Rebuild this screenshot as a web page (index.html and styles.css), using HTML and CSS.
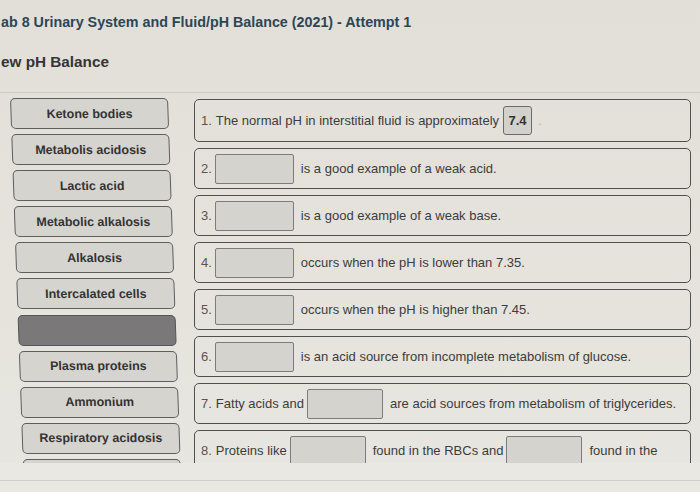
FILE: index.html
```html
<!DOCTYPE html>
<html lang="en">
<head>
  <meta charset="UTF-8">
  <meta name="viewport" content="width=device-width, initial-scale=1.0">
  <title>pH Balance</title>
  <link rel="stylesheet" href="styles.css">
</head>
<body>

  <!-- Page heading -->
  <header class="head">
    <h1 class="title">ab 8 Urinary System and Fluid/pH Balance (2021) - Attempt 1</h1>
    <h2 class="subtitle">ew pH Balance</h2>
  </header>

  <div class="quiz">
    <!-- Word bank -->
    <div class="bank">
      <div class="chip">Ketone bodies</div>
      <div class="chip">Metabolis acidosis</div>
      <div class="chip">Lactic acid</div>
      <div class="chip">Metabolic alkalosis</div>
      <div class="chip">Alkalosis</div>
      <div class="chip">Intercalated cells</div>
      <div class="chip used"></div>
      <div class="chip">Plasma proteins</div>
      <div class="chip">Ammonium</div>
      <div class="chip">Respiratory acidosis</div>
      <div class="chip"></div>
    </div>

    <!-- Questions -->
    <div class="questions">
      <div class="q">
        <span class="num">1.</span><span>The normal pH in interstitial fluid is approximately</span>
        <span class="answer">7.4</span><span class="dot">.</span>
      </div>
      <div class="q">
        <span class="num">2.</span><span class="blank"></span>
        <span>is a good example of a weak acid.</span>
      </div>
      <div class="q">
        <span class="num">3.</span><span class="blank"></span>
        <span>is a good example of a weak base.</span>
      </div>
      <div class="q">
        <span class="num">4.</span><span class="blank"></span>
        <span>occurs when the pH is lower than 7.35.</span>
      </div>
      <div class="q">
        <span class="num">5.</span><span class="blank"></span>
        <span>occurs when the pH is higher than 7.45.</span>
      </div>
      <div class="q">
        <span class="num">6.</span><span class="blank"></span>
        <span>is an acid source from incomplete metabolism of glucose.</span>
      </div>
      <div class="q">
        <span class="num">7.</span><span>Fatty acids and</span><span class="blank"></span>
        <span>are acid sources from metabolism of triglycerides.</span>
      </div>
      <div class="q">
        <span class="num">8.</span><span>Proteins like</span><span class="blank"></span>
        <span>found in the RBCs and</span><span class="blank"></span>
        <span>found in the</span>
      </div>
    </div>
  </div>

  <div class="foot"><div class="foot-line"></div></div>

</body>
</html>
```

FILE: styles.css
```css
/* Base */
* { margin: 0; padding: 0; box-sizing: border-box; }
html, body { width: 100%; height: 100%; }
body {
  font-family: "Liberation Sans", Arial, sans-serif;
  background: linear-gradient(#e2dfd8, #e8e6e0);
  color: #3a3a3a;
  overflow: hidden;
}

/* Heading */
.head { height: 93px; padding: 13px 0 0 1px; border-bottom: 1px solid #cdcac3; }
.title { font-size: 14.3px; line-height: 18px; font-weight: bold; color: #2c4656; white-space: nowrap; }
.subtitle { margin-top: 21px; font-size: 15.3px; line-height: 20px; font-weight: bold; color: #353535; }

/* Quiz area */
.quiz { display: flex; gap: 26px; height: 370px; padding: 5px 9px 0 10px; overflow: hidden; }

/* photo of the screen leans a little, so the bank drifts right as it goes down */
.bank {
  width: 158px; flex-shrink: 0;
  display: flex; flex-direction: column; gap: 5.1px;
  transform: skewX(2deg); transform-origin: top left;
}
.chip {
  height: 31px; flex-shrink: 0;
  display: flex; align-items: center; justify-content: center;
  background: #d6d4cf;
  border: 1.5px solid #5e5e5e;
  border-radius: 5px;
  font-size: 12.5px; font-weight: bold; color: #333;
}
.chip.used { background: #7a7878; border-color: #555; }

.questions { flex: 1; display: flex; flex-direction: column; gap: 6px; padding-top: 1px; }
.q {
  min-height: 41px; flex-shrink: 0;
  display: flex; align-items: center; white-space: nowrap;
  padding: 0 6px;
  border: 1.5px solid #505050;
  border-radius: 5px;
  font-size: 13px; color: #3c3c3c;
}
.q:first-child { min-height: 43px; }
.num { color: #555; margin-right: 4px; }
.num + .blank { margin-left: -1px; }
.blank {
  width: 79px; height: 30px; flex-shrink: 0;
  margin: 0 7px 0 3px;
  background: #d5d3ce;
  border: 1px solid #7c7c7c;
  border-radius: 2px;
}
.q:nth-child(n+7) .blank { width: 76px; }
.answer {
  width: 29px; height: 29px; margin-left: 4px;
  display: flex; align-items: center; justify-content: center;
  background: #d3d1cc;
  border: 1px solid #6a6a6a;
  border-radius: 3px;
  font-weight: bold; color: #333;
}
.dot { margin-left: 6px; color: #b5b3ae; }

/* Bottom strip below the scrolled area */
.foot { height: 29px; padding-top: 17px; background: #eae8e3; }
.foot-line { border-top: 1px solid #d2cfc8; }
```
